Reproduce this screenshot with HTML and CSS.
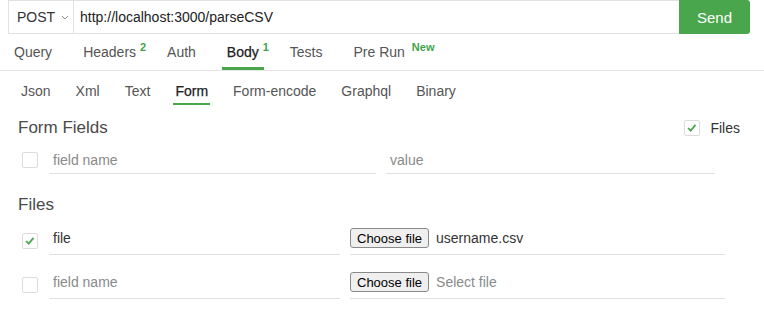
FILE: index.html
```html
<!DOCTYPE html>
<html lang="en">
<head>
  <meta charset="UTF-8" />
  <title>parseCSV request</title>
  <link rel="stylesheet" href="styles.css">
</head>
<body>
  <div class="url-bar">
    <div class="url-box">
      <div class="method">
        POST
        <svg class="chevron" viewBox="0 0 10 6" aria-hidden="true"><polyline points="1,1 5,5 9,1" /></svg>
      </div>
      <div class="url">http://localhost:3000/parseCSV</div>
    </div>
    <button class="send">Send</button>
  </div>

  <nav class="tabs">
    <div class="tab">Query</div>
    <div class="tab">Headers<sup>2</sup></div>
    <div class="tab">Auth</div>
    <div class="tab active">Body<sup>1</sup></div>
    <div class="tab">Tests</div>
    <div class="tab">Pre Run<sup class="new">New</sup></div>
  </nav>

  <nav class="subtabs">
    <div class="subtab">Json</div>
    <div class="subtab">Xml</div>
    <div class="subtab">Text</div>
    <div class="subtab active">Form</div>
    <div class="subtab">Form-encode</div>
    <div class="subtab">Graphql</div>
    <div class="subtab">Binary</div>
  </nav>

  <section class="body-form">
    <div class="section-head fields-head">
      <span class="head-title">Form Fields</span>
      <div class="files-toggle">
        <span class="check">
          <svg viewBox="0 0 16 16" aria-hidden="true"><polyline points="3.5,8 6.5,11 12,4.5" /></svg>
        </span>
        Files
      </div>
    </div>
    <div class="field-row">
      <span class="check"></span>
      <div class="input key placeholder">field name</div>
      <div class="input value placeholder">value</div>
    </div>

    <div class="section-head files-head">
      <span class="head-title">Files</span>
    </div>
    <div class="field-row file-row">
      <span class="check">
        <svg viewBox="0 0 16 16" aria-hidden="true"><polyline points="3.5,8 6.5,11 12,4.5" /></svg>
      </span>
      <div class="input key">file</div>
      <div class="input file-input">
        <button class="choose">Choose file</button>
        <span class="file-name">username.csv</span>
      </div>
    </div>
    <div class="field-row file-row">
      <span class="check"></span>
      <div class="input key placeholder">field name</div>
      <div class="input file-input">
        <button class="choose">Choose file</button>
        <span class="file-name placeholder">Select file</span>
      </div>
    </div>
  </section>
</body>
</html>
```

FILE: styles.css
```css
body {
  margin: 0;
  font-family: "Liberation Sans", Arial, sans-serif;
  font-size: 14px;
  color: #333;
  background: #fff;
}
.url-bar {
  display: flex;
  height: 34px;
  margin: 0 14px 0 8px;
}
.url-box {
  flex: 1;
  display: flex;
  border: 1px solid #e2e2e2;
  border-right: none;
}
.method {
  width: 65px;
  box-sizing: border-box;
  padding-left: 8px;
  display: flex;
  align-items: center;
  gap: 6px;
  border-right: 1px solid #e2e2e2;
  color: #333;
}
.chevron {
  width: 8px;
  height: 5px;
  fill: none;
  stroke: #888;
  stroke-width: 1.2;
}
.url {
  display: flex;
  align-items: center;
  padding-left: 6px;
  color: #222;
}
.send {
  width: 71px;
  border: none;
  border-radius: 0 3px 3px 0;
  background: #4aa64d;
  color: #fff;
  font-family: inherit;
  font-size: 15px;
}
.tabs {
  display: flex;
  gap: 21px;
  height: 36px;
  padding-left: 9px;
  border-bottom: 1px solid #e4e4e4;
}
.tab {
  position: relative;
  display: flex;
  align-items: center;
  padding: 2px 5px 0;
  color: #555;
  border-bottom: 3px solid transparent;
}
.tab.active {
  color: #222;
  -webkit-text-stroke: 0.25px #222;
  border-bottom-color: #4aa64d;
}
.tab sup {
  position: absolute;
  left: 100%;
  top: 8px;
  margin-left: -1px;
  font-size: 11px;
  font-weight: bold;
  color: #3fa34d;
  -webkit-text-stroke: 0;
  line-height: 1;
}
.tab sup.new {
  margin-left: 2px;
}
.subtabs {
  display: flex;
  gap: 21px;
  padding-left: 19px;
}
.subtab {
  padding: 8px 2px 0;
  line-height: 24px;
  color: #555;
  border-bottom: 2px solid transparent;
}
.subtab.active {
  color: #222;
  -webkit-text-stroke: 0.25px #222;
  border-bottom-color: #4aa64d;
}
.body-form {
  padding: 0 24px 0 18px;
}
.section-head {
  height: 40px;
  display: flex;
  align-items: center;
  justify-content: space-between;
  font-size: 17px;
  color: #4a4a4a;
}
.fields-head {
  height: 41px;
}
.head-title {
  padding-top: 5px;
}
.files-head {
  margin-top: 8px;
}
.files-toggle {
  display: flex;
  align-items: center;
  gap: 10px;
  font-size: 14px;
  color: #333;
  padding-top: 4px;
}
.check {
  width: 14px;
  height: 14px;
  border: 1px solid #dcdcdc;
  border-radius: 2px;
  background: #fff;
  display: inline-flex;
  flex-shrink: 0;
}
.check svg {
  width: 14px;
  height: 14px;
  fill: none;
  stroke: #4aa64d;
  stroke-width: 2;
}
.field-row {
  display: flex;
  align-items: center;
  gap: 10px;
  padding-left: 4px;
}
.field-row .check {
  margin-right: 1px;
}
.input {
  height: 27px;
  box-sizing: content-box;
  display: flex;
  align-items: center;
  padding-left: 4px;
  border-bottom: 1px solid #e0e0e0;
  color: #333;
}
.placeholder {
  color: #8a8a8a;
}
.key {
  width: 323px;
}
.value {
  width: 325px;
}
.file-row {
  margin-top: 5px;
}
.file-row + .file-row {
  margin-top: 16px;
}
.file-row .input {
  height: 22px;
  padding-bottom: 5px;
}
.file-row .key {
  width: 287px;
}
.file-input {
  width: 375px;
  padding-left: 0;
  gap: 7px;
}
.choose {
  height: 20px;
  padding: 0 6px;
  border: 1px solid #8a8a8a;
  border-radius: 3px;
  background: #efefef;
  font-family: inherit;
  font-size: 13px;
  color: #000;
}
.file-name {
  font-size: 14px;
}
```
